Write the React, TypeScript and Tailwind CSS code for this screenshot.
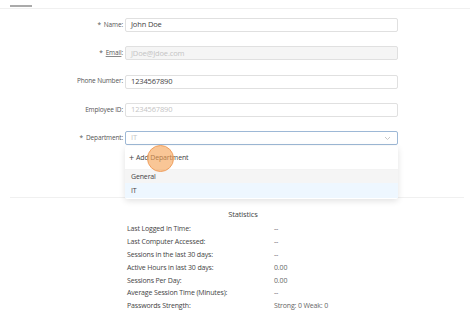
import { ReactNode } from 'react';

interface FieldProps {
	label: string;
	required?: boolean;
	underline?: boolean;
	children: ReactNode;
}

function Field({ label, required = false, underline = false, children }: FieldProps) {
	return (
		<div className="relative flex items-center h-[14px]">
			<div className="w-[125px] pr-[2px] text-right text-[6.5px] tracking-[-0.15px] text-[#555] whitespace-nowrap">
				{required && <span className="mr-[3px]">*</span>}
				<span className={underline ? 'underline decoration-[#888]' : ''}>{label}</span>:
			</div>
			{children}
		</div>
	);
}

const stats: { label: string; value: string }[] = [
	{ label: 'Last Logged In Time:', value: '--' },
	{ label: 'Last Computer Accessed:', value: '--' },
	{ label: 'Sessions in the last 30 days:', value: '--' },
	{ label: 'Active Hours in last 30 days:', value: '0.00' },
	{ label: 'Sessions Per Day:', value: '0.00' },
	{ label: 'Average Session Time (Minutes):', value: '--' },
	{ label: 'Passwords Strength:', value: 'Strong: 0 Weak: 0' },
];

export default function App() {
	return (
		<div className="w-[474px] h-[314px] overflow-hidden bg-white text-[7px] tracking-[-0.15px] leading-none text-[#333] font-['Open_Sans',sans-serif]">
			{/* tab strip */}
			<div className="h-[9px] pt-[5px] border-b border-[#f0f0f0] pl-[10px] mr-[4px]">
				<div className="w-[22px] h-[2px] bg-[#aaa]" />
			</div>

			{/* form */}
			<div className="flex flex-col gap-[14.25px] pt-[9px] text-[7.5px]">
				<Field label="Name" required>
					<div className="w-[273px] h-[14px] border border-[#e0e0e0] rounded-[2px] pl-[5px] flex items-center text-[#444]">
						John Doe
					</div>
				</Field>
				<Field label="Email" required underline>
					<div className="w-[273px] h-[14px] border border-[#e0e0e0] rounded-[2px] pl-[5px] flex items-center bg-[#f5f5f5] text-[#c4c4c4]">
						JDoe@Jdoe.com
					</div>
				</Field>
				<Field label="Phone Number">
					<div className="w-[273px] h-[14px] border border-[#e0e0e0] rounded-[2px] pl-[5px] flex items-center text-[#444]">
						1234567890
					</div>
				</Field>
				<Field label="Employee ID">
					<div className="w-[273px] h-[14px] border border-[#e0e0e0] rounded-[2px] pl-[5px] flex items-center text-[#c4c4c4]">
						1234567890
					</div>
				</Field>
				<Field label="Department" required>
					<div className="w-[273px] h-[14px] border border-[#9db8d6] rounded-[2px] pl-[5px] pr-[6px] flex items-center justify-between text-[#c4c4c4]">
						<span>IT</span>
						<svg width="7" height="5" viewBox="0 0 7 5" fill="none" stroke="#c8c8c8" strokeWidth="1">
							<path d="M1 1l2.5 2.5L6 1" />
						</svg>
					</div>

					{/* dropdown menu */}
					<div className="absolute left-[125px] top-[15px] w-[273px] h-[53px] z-10 bg-white rounded-[2px] shadow-[0_2px_6px_rgba(0,0,0,0.12)] flex flex-col text-[7px]">
						<div className="h-[24px] flex items-center pl-[4px] text-[#444] border-b border-[#f3f3f3]">
							<span className="text-[9px] mr-[2px] -mt-[1px]">+</span>Add Department
						</div>
						<div className="h-[13px] flex items-center pl-[6px] bg-[#f5f5f5] text-[#444]">General</div>
						<div className="h-[15px] flex items-center pl-[6px] bg-[#eef7ff] text-[#444]">IT</div>
					</div>

					{/* click highlight */}
					<div className="absolute left-[147px] top-[14px] w-[27px] h-[27px] z-20 rounded-full bg-[#f5a050]/60 border border-[#f0a060]" />
				</Field>
			</div>

			{/* divider */}
			<div className="mt-[52px] mx-[10px] border-t border-[#f0f0f0]" />

			{/* statistics */}
			<div className="pt-[13px] pl-[12px] text-center text-[7.5px] text-[#444]">Statistics</div>
			<div className="flex flex-col mt-[4px] pl-[127px]">
				{stats.map((s) => (
					<div key={s.label} className="flex items-center h-[12.8px]">
						<div className="w-[147px] text-[#444]">{s.label}</div>
						<div className="text-[#666]">{s.value}</div>
					</div>
				))}
			</div>
		</div>
	);
}
